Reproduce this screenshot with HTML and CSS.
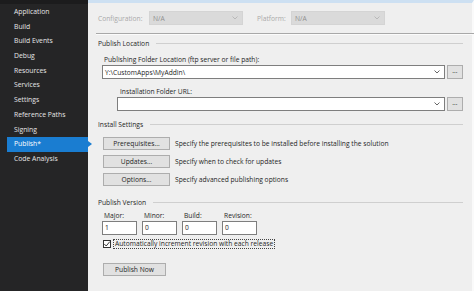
FILE: index.html
```html
<!DOCTYPE html>
<html lang="en">
<head>
  <meta charset="UTF-8">
  <title>Publish</title>
  <link rel="stylesheet" href="styles.css">
</head>
<body>

  <nav class="sidebar">
    <div class="nav-item">Application</div>
    <div class="nav-item">Build</div>
    <div class="nav-item">Build Events</div>
    <div class="nav-item">Debug</div>
    <div class="nav-item">Resources</div>
    <div class="nav-item">Services</div>
    <div class="nav-item">Settings</div>
    <div class="nav-item">Reference Paths</div>
    <div class="nav-item">Signing</div>
    <div class="nav-item active">Publish*</div>
    <div class="nav-item">Code Analysis</div>
  </nav>

  <main class="page">
    <div class="config-row">
      <span class="config-label">Configuration:</span>
      <div class="combo disabled">
        <span>N/A</span>
        <svg class="chevron" width="6" height="4" viewBox="0 0 6 4"><polyline points="0.5,0.5 3,3 5.5,0.5" /></svg>
      </div>
      <span class="config-label platform-label">Platform:</span>
      <div class="combo disabled">
        <span>N/A</span>
        <svg class="chevron" width="6" height="4" viewBox="0 0 6 4"><polyline points="0.5,0.5 3,3 5.5,0.5" /></svg>
      </div>
    </div>

    <div class="separator"></div>

    <div class="group-title title-location"><span>Publish Location</span><div class="group-line"></div></div>
    <div class="field-label">Publishing Folder Location (ftp server or file path):</div>
    <div class="path-row">
      <div class="combo-input">
        <span>Y:\CustomApps\MyAddin\</span>
        <svg class="chevron dark" width="6" height="4" viewBox="0 0 6 4"><polyline points="0.5,0.5 3,3 5.5,0.5" /></svg>
      </div>
      <button class="browse">...</button>
    </div>
    <div class="field-label indent">Installation Folder URL:</div>
    <div class="path-row indent-row">
      <div class="combo-input">
        <span></span>
        <svg class="chevron dark" width="6" height="4" viewBox="0 0 6 4"><polyline points="0.5,0.5 3,3 5.5,0.5" /></svg>
      </div>
      <button class="browse">...</button>
    </div>

    <div class="group-title title-install"><span>Install Settings</span><div class="group-line"></div></div>
    <div class="action-list">
      <div class="action-row">
        <button class="push-button">Prerequisites...</button>
        <span>Specify the prerequisites to be installed before installing the solution</span>
      </div>
      <div class="action-row">
        <button class="push-button">Updates...</button>
        <span>Specify when to check for updates</span>
      </div>
      <div class="action-row">
        <button class="push-button">Options...</button>
        <span>Specify advanced publishing options</span>
      </div>
    </div>

    <div class="group-title title-version"><span>Publish Version</span><div class="group-line"></div></div>
    <div class="version-grid">
      <div class="version-field"><span>Major:</span><div class="text-box">1</div></div>
      <div class="version-field"><span>Minor:</span><div class="text-box">0</div></div>
      <div class="version-field"><span>Build:</span><div class="text-box">0</div></div>
      <div class="version-field"><span>Revision:</span><div class="text-box">0</div></div>
    </div>
    <div class="check-row">
      <div class="check-box">
        <svg width="8" height="8" viewBox="0 0 8 8"><polyline points="1.3,4 3.2,6 6.8,1.6" /></svg>
      </div>
      <span class="check-label">Automatically increment revision with each release</span>
    </div>

    <button class="push-button publish-button">Publish Now</button>
  </main>

</body>
</html>
```

FILE: styles.css
```css
body {
  margin: 0;
  padding: 0;
  width: 474px;
  height: 291px;
  overflow: hidden;
  display: flex;
  font-family: "Open Sans", "Noto Sans", sans-serif;
  font-size: 6.7px;
  color: #1e1e1e;
}

/* left navigation */

.sidebar {
  width: 88px;
  flex-shrink: 0;
  background: #252526;
  border-top: 4px solid #1c1c1d;
  padding-top: 1px;
  box-sizing: border-box;
}

.nav-item {
  position: relative;
  height: 14.7px;
  line-height: 14.7px;
  padding-left: 14px;
  color: #e6e6e6;
  font-size: 6.8px;
}

.nav-item.active {
  background: #1a7dd1;
  color: #ffffff;
  margin-left: 7px;
  padding-left: 7px;
}

.nav-item.active::after {
  content: "";
  position: absolute;
  right: -4px;
  top: 3.5px;
  border-left: 4px solid #1a7dd1;
  border-top: 3.5px solid transparent;
  border-bottom: 3.5px solid transparent;
}

/* property page */

.page {
  flex: 1;
  background: #efefef;
  border-top: 3px solid #cde0f2;
  border-right: 2px solid #fafafa;
  padding: 0 9px 0 10px;
}

.config-row {
  display: flex;
  align-items: center;
  height: 14px;
  margin-top: 8px;
}

.config-label {
  color: #a9a9a9;
  width: 51px;
}

.platform-label {
  margin-left: 14px;
  width: 34px;
}

.combo {
  display: flex;
  align-items: center;
  justify-content: space-between;
  box-sizing: border-box;
  width: 94px;
  height: 14px;
  padding: 0 4px 0 3px;
}

.combo.disabled {
  background: #dadada;
  border: 1px solid #d4d4d4;
  color: #8f8f8f;
}

.chevron polyline {
  fill: none;
  stroke: #b4b4b4;
  stroke-width: 0.9;
}

.chevron.dark polyline {
  stroke: #555555;
}

.separator {
  height: 1px;
  margin: 8px -11px 0 -2px;
  background: #a8a8a8;
  border-bottom: 1px solid #fbfbfb;
}

.group-title {
  display: flex;
  align-items: center;
  height: 10px;
  margin-top: 3px;
}

.group-line {
  flex: 1;
  height: 1px;
  margin-left: 7px;
  background: #cfcfcf;
}

.title-install {
  margin-top: 8px;
}

.title-version {
  margin-top: 12px;
}

.field-label {
  height: 10px;
  line-height: 10px;
  margin: 7px 0 0 6px;
}

.field-label.indent {
  margin: 8px 0 0 22px;
}

.path-row {
  display: flex;
  gap: 2px;
  height: 14px;
  margin-left: 4px;
}

.path-row.indent-row {
  margin-left: 19px;
}

.combo-input {
  flex: 1;
  display: flex;
  align-items: center;
  justify-content: space-between;
  background: #ffffff;
  border: 1px solid #7e7e7e;
  padding: 0 4px 0 2px;
}

.browse {
  width: 16px;
  height: 14px;
  padding: 0 0 3px;
  background: #e1e1e1;
  border: 1px solid #adadad;
  font-family: inherit;
  font-size: 6.7px;
  color: #1e1e1e;
}

.action-list {
  display: flex;
  flex-direction: column;
  gap: 5px;
  margin: 7.5px 0 0 5px;
}

.action-row {
  display: flex;
  align-items: center;
  gap: 5px;
}

.push-button {
  box-sizing: border-box;
  width: 67px;
  height: 13px;
  padding: 0;
  background: #e1e1e1;
  border: 1px solid #adadad;
  font-family: inherit;
  font-size: 6.7px;
  color: #1e1e1e;
}

.version-grid {
  display: flex;
  gap: 5px;
  margin: 3px 0 0 4px;
}

.version-field {
  display: flex;
  flex-direction: column;
  width: 35px;
}

.version-field span {
  height: 10px;
  line-height: 10px;
  padding-left: 2px;
}

.text-box {
  box-sizing: border-box;
  height: 14px;
  line-height: 12px;
  padding-left: 2px;
  background: #ffffff;
  border: 1px solid #7e7e7e;
}

.check-row {
  display: flex;
  align-items: center;
  gap: 2px;
  height: 10px;
  margin: 4px 0 0 5px;
}

.check-box {
  box-sizing: border-box;
  width: 8px;
  height: 8px;
  background: #ffffff;
  border: 1px solid #333333;
}

.check-box svg {
  display: block;
  margin: -1px;
}

.check-box polyline {
  fill: none;
  stroke: #222222;
  stroke-width: 0.9;
}

.check-label {
  line-height: 8px;
  padding: 0 1px;
  border: 1px dotted #444444;
}

.publish-button {
  display: block;
  width: 63px;
  height: 13.5px;
  margin: 14px 0 0 5px;
}
```
